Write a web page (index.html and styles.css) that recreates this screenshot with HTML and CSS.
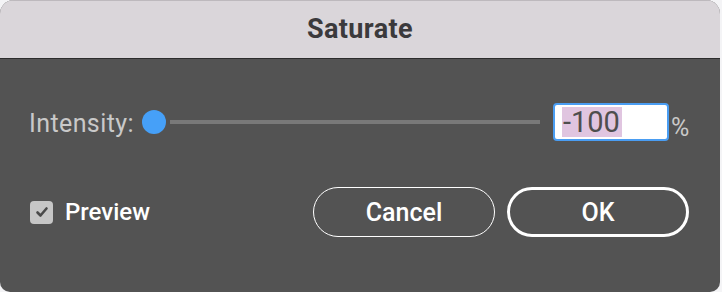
FILE: index.html
```html
<!DOCTYPE html>
<html>
<head>
<meta charset="utf-8">
<link rel="stylesheet" href="styles.css">
</head>
<body>
<div class="dialog">
  <div class="titlebar">Saturate</div>
  <div class="content">
    <div class="row intensity-row">
      <span class="label">Intensity:</span>
      <div class="slider">
        <span class="knob"></span>
        <span class="track"></span>
      </div>
      <div class="field"><span class="sel">-100</span></div>
      <span class="pct">%</span>
    </div>
    <div class="row actions">
      <label class="preview">
        <span class="check">
          <svg width="16" height="16" viewBox="0 0 16 16"><path d="M3.5 8.5 L6.5 11.5 L12.5 4.5" fill="none" stroke="#4a4a4a" stroke-width="2.6" stroke-linecap="round" stroke-linejoin="round"/></svg>
        </span>
        <span class="preview-text">Preview</span>
      </label>
      <div class="buttons">
        <button class="btn cancel">Cancel</button>
        <button class="btn ok">OK</button>
      </div>
    </div>
  </div>
</div>
</body>
</html>
```
FILE: styles.css
```css
html, body {
  margin: 0;
  padding: 0;
  background: #f4f4f6;
}
body {
  width: 722px;
  height: 292px;
  overflow: hidden;
  font-family: Roboto, "Noto Sans", sans-serif;
}
.dialog {
  width: 720px;
  height: 292px;
  border-radius: 14px 14px 10px 10px;
  overflow: hidden;
  background: #535353;
  display: flex;
  flex-direction: column;
}
.titlebar {
  flex: none;
  background: #dad6da;
  border-bottom: 1px solid #2c2c2c;
  border-top: 1px solid #bdb9bd;
  box-sizing: border-box;
  height: 59px;
  display: flex;
  align-items: center;
  justify-content: center;
  font-family: Roboto, "Liberation Sans", sans-serif;
  font-weight: bold;
  font-size: 27px;
  letter-spacing: 0.4px;
  color: #3b3a3c;
  padding-bottom: 1px;
}
.content {
  flex: 1;
  padding: 44px 0 0 0;
  display: flex;
  flex-direction: column;
}
.row {
  display: flex;
  align-items: center;
}
.intensity-row {
  height: 38px;
  padding-left: 29px;
}
.label {
  width: 113px;
  font-size: 25px;
  letter-spacing: 0.4px;
  color: #c9c9c9;
  padding-top: 3px;
}
.slider {
  display: flex;
  align-items: center;
  width: 398px;
}
.knob {
  width: 24px;
  height: 24px;
  border-radius: 50%;
  background: #46a0f8;
  flex: none;
}
.track {
  height: 4px;
  width: 370px;
  margin-left: 4px;
  background: #797979;
}
.field {
  margin-left: 13px;
  width: 116px;
  height: 38px;
  box-sizing: border-box;
  border: 2px solid #4a9df2;
  border-radius: 4px;
  background: #ffffff;
  display: flex;
  align-items: center;
  padding-left: 7px;
}
.sel {
  background: #e0c5e0;
  font-size: 29px;
  line-height: 30px;
  color: #4e4e4e;
  padding: 0 2px 0 1px;
}
.pct {
  margin-left: 2px;
  font-size: 25px;
  color: #c9c9c9;
  margin-top: 10px;
}
.actions {
  margin-top: 46px;
  height: 50px;
  padding-left: 30px;
}
.preview {
  display: flex;
  align-items: center;
  width: 283px;
}
.check {
  width: 23px;
  height: 23px;
  border-radius: 4px;
  background: #c6c6c6;
  display: flex;
  align-items: center;
  justify-content: center;
  margin-right: 12px;
}
.preview-text {
  font-size: 24px;
  font-weight: 500;
  color: #ffffff;
}
.buttons {
  display: flex;
  gap: 12px;
}
.btn {
  width: 182px;
  height: 50px;
  border-radius: 25px;
  background: transparent;
  color: #ffffff;
  font-family: Roboto, "Noto Sans", sans-serif;
  font-size: 25px;
  font-weight: 500;
  box-sizing: border-box;
  padding: 0;
}
.cancel {
  border: 1.5px solid #ffffff;
}
.ok {
  border: 3px solid #ffffff;
}
```
